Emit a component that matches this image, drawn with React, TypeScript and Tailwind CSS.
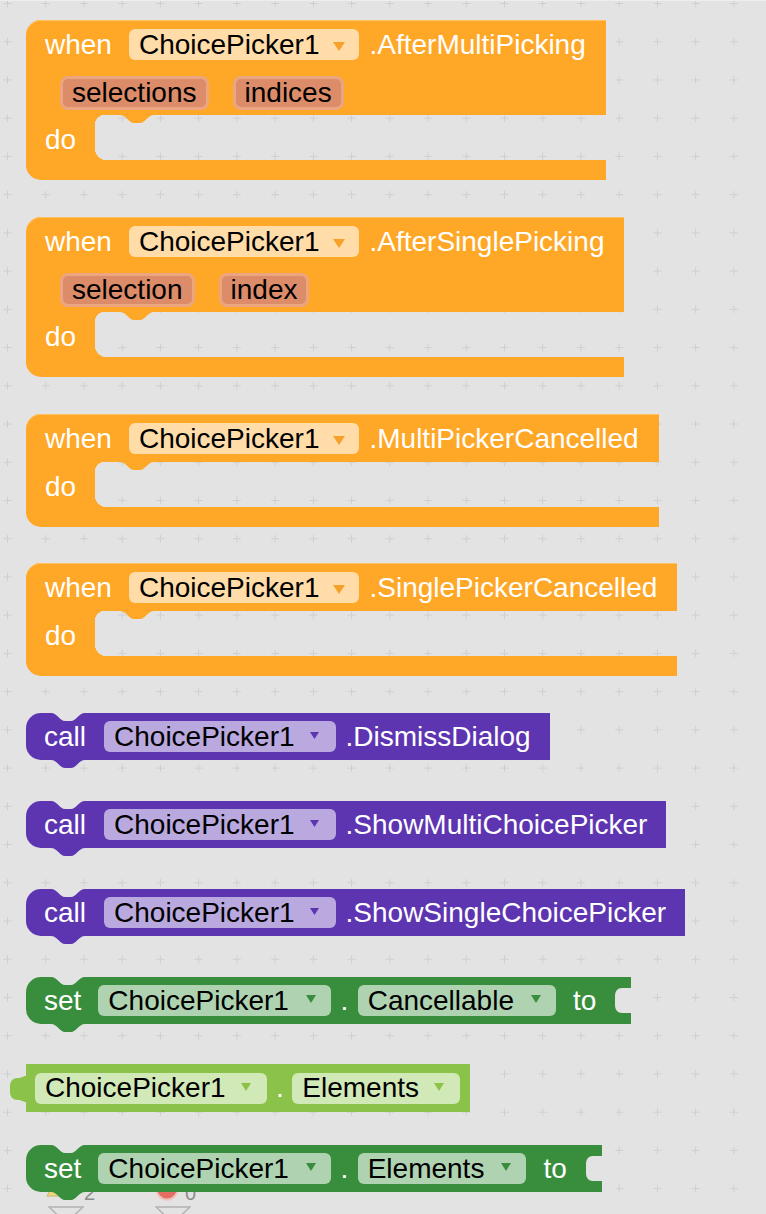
import React from "react";

const TAB = "M0 0C6 0 9 8 14 8H20C25 8 28 0 34 0Z";
const BG = "#e3e3e3";

type Kind = "orange" | "purple" | "green" | "lime";

const FIELD: Record<
  Kind,
  { box: string; arrowCls: string; color: string; w: number; h: number }
> = {
  orange: {
    box: "bg-[#ffdca8] pl-[10px] pr-[14px]",
    arrowCls: "ml-[14px] mt-[4px]",
    color: "#f7a12a",
    w: 12,
    h: 9,
  },
  purple: {
    box: "bg-[#b9a9df] pl-[10px] pr-[17px]",
    arrowCls: "ml-[15px] -mt-[2px]",
    color: "#5e35b1",
    w: 9,
    h: 7,
  },
  green: {
    box: "bg-[#afd3b0] pl-[10px] pr-[15px]",
    arrowCls: "ml-[17px] -mt-[3px]",
    color: "#388e3c",
    w: 10,
    h: 8,
  },
  lime: {
    box: "bg-[#d1e8b7] pl-[10px] pr-[16px]",
    arrowCls: "ml-[15px] -mt-[2px]",
    color: "#8bc34a",
    w: 10,
    h: 8,
  },
};

function Arrow({ w, h, color, cls }: { w: number; h: number; color: string; cls: string }) {
  return (
    <svg width={w} height={h} viewBox={`0 0 ${w} ${h}`} className={cls}>
      <path d={`M0 0H${w}L${w / 2} ${h}Z`} fill={color} />
    </svg>
  );
}

function Field({ kind, text }: { kind: Kind; text: string }) {
  const f = FIELD[kind];
  return (
    <div className={`flex h-[31px] items-center rounded-[6px] text-black ${f.box}`}>
      <span>{text}</span>
      <Arrow w={f.w} h={f.h} color={f.color} cls={f.arrowCls} />
    </div>
  );
}

function EventBlock({
  name,
  params,
  className,
}: {
  name: string;
  params?: string[];
  className?: string;
}) {
  return (
    <div className={`flex w-max flex-col ${className ?? ""}`}>
      <div className="flex h-[48px] items-center rounded-tl-[15px] bg-[#ffa727] pl-[19px] pr-[20px] pt-[1px] shadow-[inset_0_1px_0_#ffc163]">
        <span className="text-white">when</span>
        <div className="ml-[17px]">
          <Field kind="orange" text="ChoicePicker1" />
        </div>
        <span className="ml-[10px] text-white">{name}</span>
      </div>
      {params && (
        <div className="flex h-[47px] items-start gap-[24px] bg-[#ffa727] pl-[34px] pt-[8px]">
          {params.map((p) => (
            <div
              key={p}
              className="flex h-[34px] items-center rounded-[8px] border-[3px] border-[#eca581] bg-[#dd8c69] px-[9px] text-black"
            >
              {p}
            </div>
          ))}
        </div>
      )}
      <div className="flex h-[45px]">
        <div className="flex w-[69px] items-center bg-[#ffa727] pl-[19px] pt-[5px] text-white">do</div>
        <div className="relative flex-1">
          <div className="absolute left-0 top-0 h-[10px] w-[10px] bg-[radial-gradient(circle_at_100%_100%,transparent_10px,#ffa727_10.5px)]" />
          <div className="absolute bottom-0 left-0 h-[12px] w-[12px] bg-[radial-gradient(circle_at_100%_0%,transparent_12px,#ffa727_12.5px)]" />
          <svg className="absolute left-[25px] top-0" width="34" height="8" viewBox="0 0 34 8">
            <path d={TAB} fill="#ffa727" />
          </svg>
        </div>
      </div>
      <div className="h-[20px] rounded-bl-[15px] bg-[#ffa727]" />
    </div>
  );
}

function Notches({ color }: { color: string }) {
  return (
    <>
      <svg className="absolute left-[25px] top-0" width="34" height="8" viewBox="0 0 34 8">
        <path d={TAB} fill={BG} />
      </svg>
      <svg className="absolute left-[25px] top-full" width="34" height="8" viewBox="0 0 34 8">
        <path d={TAB} fill={color} />
      </svg>
    </>
  );
}

function CallBlock({ name, className }: { name: string; className?: string }) {
  return (
    <div
      className={`relative flex h-[47px] w-max items-center rounded-l-[15px] bg-[#5e35b1] pl-[18px] pr-[19px] ${className ?? ""}`}
    >
      <Notches color="#5e35b1" />
      <span className="text-white">call</span>
      <div className="ml-[18px]">
        <Field kind="purple" text="ChoicePicker1" />
      </div>
      <span className="ml-[10px] text-white">{name}</span>
    </div>
  );
}

function SetBlock({ prop, className }: { prop: string; className?: string }) {
  return (
    <div
      className={`relative flex h-[47px] w-max items-center rounded-l-[15px] bg-[#388e3c] pl-[18px] ${className ?? ""}`}
    >
      <Notches color="#388e3c" />
      <span className="text-white">set</span>
      <div className="ml-[17px]">
        <Field kind="green" text="ChoicePicker1" />
      </div>
      <span className="mx-[9.5px] text-white">.</span>
      <Field kind="green" text={prop} />
      <span className="ml-[17px] text-white">to</span>
      <div className="relative w-[35px] self-stretch">
        <svg className="absolute right-0 top-[11px]" width="16" height="25" viewBox="0 0 16 25">
          <path d="M16 0H7C2.5 0 0 3.5 0 8V17C0 21.5 2.5 25 7 25H16Z" fill={BG} />
        </svg>
      </div>
    </div>
  );
}

function ValueBlock({ className }: { className?: string }) {
  return (
    <div
      className={`relative flex h-[48px] w-max items-center bg-[#8bc34a] pl-[9px] pr-[10px] ${className ?? ""}`}
    >
      <svg className="absolute right-full top-[12px]" width="16" height="26" viewBox="0 0 16 26">
        <path
          d="M16 0C13 0 12 2 8 2C3 2 0 5 0 10V16C0 21 3 24 8 24C12 24 13 26 16 26Z"
          fill="#8bc34a"
        />
      </svg>
      <Field kind="lime" text="ChoicePicker1" />
      <span className="ml-[9.5px] mr-[8.5px] text-white">.</span>
      <Field kind="lime" text="Elements" />
    </div>
  );
}

function Grid() {
  const s = 38.23;
  return (
    <svg className="absolute inset-0" width="766" height="1214">
      <defs>
        <pattern
          id="grid"
          patternUnits="userSpaceOnUse"
          width={s}
          height={s}
          x={7.5 - s / 2}
          y={2.5 - s / 2}
        >
          <path
            d={`M${s / 2 - 4} ${s / 2}H${s / 2 + 4}M${s / 2} ${s / 2 - 4}V${s / 2 + 4}`}
            stroke="#cfcfcf"
            strokeWidth="1"
          />
        </pattern>
      </defs>
      <rect width="766" height="1214" fill="url(#grid)" />
    </svg>
  );
}

function Indicators() {
  return (
    <div className="absolute left-0 top-0 z-0 font-['Liberation_Sans',Arial,sans-serif] text-[20px] leading-none text-[#8c8c8c]">
      <svg className="absolute left-[46px] top-[1174px]" width="24" height="22" viewBox="0 0 24 22">
        <path d="M12 1L23 21H1Z" fill="#efd97e" stroke="#c9b46a" strokeWidth="1" />
      </svg>
      <span className="absolute left-[84px] top-[1182px]">2</span>
      <svg className="absolute left-[155px] top-[1176px]" width="24" height="24" viewBox="0 0 24 24">
        <circle cx="12" cy="12" r="10.5" fill="#e46d64" stroke="#f1c0ba" strokeWidth="2" />
      </svg>
      <span className="absolute left-[185px] top-[1182px]">0</span>
      <svg className="absolute left-[48px] top-[1205px]" width="36" height="18" viewBox="0 0 36 18">
        <path d="M1 1H35L18 17Z" fill="none" stroke="#b3b3b3" strokeWidth="1.5" />
      </svg>
      <svg className="absolute left-[155px] top-[1205px]" width="36" height="18" viewBox="0 0 36 18">
        <path d="M1 1H35L18 17Z" fill="none" stroke="#b3b3b3" strokeWidth="1.5" />
      </svg>
    </div>
  );
}

export default function App() {
  return (
    <div className="relative h-[1214px] w-[766px] overflow-hidden border-t border-[#eeeeee] bg-[#e3e3e3]">
      <Grid />
      <Indicators />
      <div className="relative z-10 flex flex-col items-start pl-[26px] pt-[19px] font-['Liberation_Sans',Arial,sans-serif] text-[28px] leading-none">
        <EventBlock name=".AfterMultiPicking" params={["selections", "indices"]} />
        <EventBlock
          name=".AfterSinglePicking"
          params={["selection", "index"]}
          className="mt-[37px]"
        />
        <EventBlock name=".MultiPickerCancelled" className="mt-[37px]" />
        <EventBlock name=".SinglePickerCancelled" className="mt-[36px]" />
        <CallBlock name=".DismissDialog" className="mt-[37px]" />
        <CallBlock name=".ShowMultiChoicePicker" className="mt-[41px]" />
        <CallBlock name=".ShowSingleChoicePicker" className="mt-[41px]" />
        <SetBlock prop="Cancellable" className="mt-[41px]" />
        <ValueBlock className="mt-[40px]" />
        <SetBlock prop="Elements" className="mt-[33px]" />
      </div>
    </div>
  );
}
